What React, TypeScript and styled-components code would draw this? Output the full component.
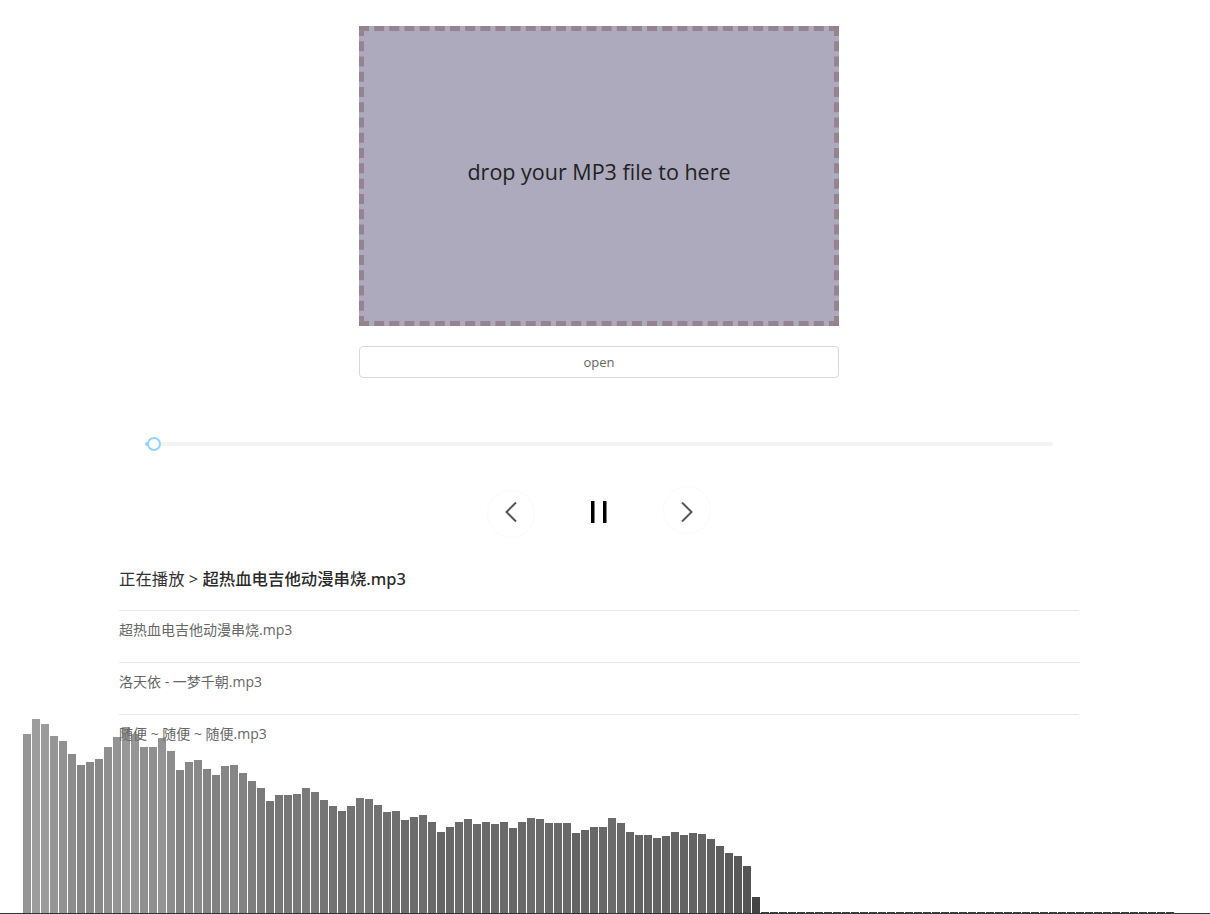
import React, { FC } from "react";
import styled, { createGlobalStyle } from "styled-components";

const GlobalStyle = createGlobalStyle`
  html, body {
    margin: 0;
    padding: 0;
    background: #ffffff;
  }
  body {
    font-family: "Open Sans", "Noto Sans CJK SC", "Noto Sans", sans-serif;
    color: #333333;
    overflow: hidden;
  }
`;

const playlist = [
  "超热血电吉他动漫串烧.mp3",
  "洛天依 - 一梦千朝.mp3",
  "随便 ~ 随便 ~ 随便.mp3",
];

// bar tops in page pixels, read from the spectrum
const barTops = [
  734, 719, 724, 736, 741, 754, 765, 762, 759, 747, 737, 727, 734, 747, 747,
  738, 751, 770, 762, 760, 769, 775, 766, 765, 773, 781, 788, 801, 795, 795,
  794, 788, 792, 800, 806, 811, 806, 798, 799, 805, 812, 811, 820, 817, 815,
  822, 832, 827, 822, 819, 824, 822, 824, 822, 828, 822, 818, 819, 823, 823,
  823, 833, 830, 827, 827, 818, 823, 832, 835, 835, 838, 836, 832, 835, 833,
  834, 839, 846, 853, 856, 866, 897,
];
const BAR_COUNT = 128;
const spectrum = Array.from({ length: BAR_COUNT }, (_, i) =>
  i < barTops.length ? 913 - barTops[i] : 1
);

const ChevronLeft: FC = () => (
  <svg width="16" height="22" viewBox="0 0 16 22">
    <polyline
      points="13,1.5 3.5,11 13,20.5"
      fill="none"
      stroke="#555555"
      strokeWidth="2"
    />
  </svg>
);

const ChevronRight: FC = () => (
  <svg width="16" height="22" viewBox="0 0 16 22">
    <polyline
      points="3,1.5 12.5,11 3,20.5"
      fill="none"
      stroke="#555555"
      strokeWidth="2"
    />
  </svg>
);

const PauseIcon: FC = () => (
  <svg width="18" height="22" viewBox="0 0 18 22">
    <rect x="1" y="0" width="3.5" height="22" fill="#000000" />
    <rect x="13" y="0" width="3.5" height="22" fill="#000000" />
  </svg>
);

const Spectrum: FC = () => (
  <SpectrumWrapper>
    <svg width="1210" height="200" viewBox="0 0 1210 200">
      {spectrum.map((h, i) => {
        const c = Math.min(255, Math.round(60 + h * 0.5));
        return (
          <rect
            key={i}
            x={23 + i * 9}
            y={199 - h}
            width={8}
            height={h}
            fill={`rgb(${c},${c},${c})`}
          />
        );
      })}
      <rect x="0" y="199" width="1210" height="1" fill="#2b3a40" />
    </svg>
  </SpectrumWrapper>
);

const App: FC = () => {
  return (
    <>
      <GlobalStyle />
      <Page>
        <Content>
          <DropZone>
            <DropText>drop your MP3 file to here</DropText>
          </DropZone>
          <OpenButton>open</OpenButton>
          <Slider>
            <SliderFill />
            <SliderHandle />
          </Slider>
          <Controls>
            <RoundButton offset={2}>
              <ChevronLeft />
            </RoundButton>
            <PlayButton>
              <PauseIcon />
            </PlayButton>
            <RoundButton offset={-2}>
              <ChevronRight />
            </RoundButton>
          </Controls>
          <PlaylistWrapper>
            <NowPlaying>
              正在播放 &gt; <CurrentName>{playlist[0]}</CurrentName>
            </NowPlaying>
            {playlist.map((name) => (
              <Track key={name}>{name}</Track>
            ))}
          </PlaylistWrapper>
        </Content>
        <Spectrum />
      </Page>
    </>
  );
};

export default App;

const Page = styled.div`
  position: relative;
  width: 1210px;
  height: 914px;
  overflow: hidden;
`;

const Content = styled.main`
  position: relative;
  z-index: 1;
  width: 1198px;
  display: flex;
  flex-direction: column;
  align-items: center;
  padding-top: 26px;
`;

const DropZone = styled.div`
  box-sizing: border-box;
  width: 480px;
  height: 300px;
  background: #adaabd;
  border: 5px dashed #958490;
  display: flex;
  align-items: center;
  justify-content: center;
`;

const DropText = styled.span`
  font-size: 21.5px;
  color: #222222;
  margin-bottom: 9px;
`;

const OpenButton = styled.button`
  box-sizing: border-box;
  margin-top: 20px;
  width: 480px;
  height: 32px;
  background: #ffffff;
  border: 1px solid #d9d9d9;
  border-radius: 4px;
  font-family: "Open Sans", "Noto Sans", sans-serif;
  font-size: 13px;
  color: #666666;
  cursor: pointer;
`;

const Slider = styled.div`
  position: relative;
  margin-top: 59px;
  width: 908px;
  height: 14px;
  display: flex;
  align-items: center;
  &::before {
    content: "";
    display: block;
    width: 100%;
    height: 4px;
    border-radius: 2px;
    background: #f3f3f3;
  }
`;

const SliderFill = styled.div`
  position: absolute;
  left: 0;
  top: 5px;
  width: 4px;
  height: 4px;
  background: #91d5ff;
  border-radius: 2px;
`;

const SliderHandle = styled.div`
  position: absolute;
  left: 2px;
  top: 0;
  box-sizing: border-box;
  width: 14px;
  height: 14px;
  border-radius: 50%;
  background: #ffffff;
  border: 2px solid #91d5ff;
`;

const Controls = styled.div`
  margin-top: 37px;
  display: flex;
  align-items: center;
  gap: 40px;
`;

const RoundButton = styled.div<{ offset: number }>`
  box-sizing: border-box;
  width: 48px;
  height: 48px;
  border-radius: 50%;
  border: 1px solid #fafafa;
  display: flex;
  align-items: center;
  justify-content: center;
  transform: translateY(${({ offset }) => offset}px);
  svg {
    transform: translateY(${({ offset }) => -offset}px);
  }
`;

const PlayButton = styled.div`
  width: 48px;
  height: 48px;
  display: flex;
  align-items: center;
  justify-content: center;
`;

const PlaylistWrapper = styled.section`
  margin-top: 32px;
  width: 960px;
`;

const NowPlaying = styled.div`
  font-size: 16.4px;
  line-height: 22px;
  color: #333333;
  padding-bottom: 20px;
`;

const CurrentName = styled.span`
  font-family: "Noto Sans", "Noto Sans CJK SC", sans-serif;
  font-weight: 500;
  color: #2a2a2a;
`;

const Track = styled.div`
  border-top: 1px solid #e8e8e8;
  padding: 9px 0 22px;
  font-size: 14px;
  line-height: 20px;
  color: #666666;
`;

const SpectrumWrapper = styled.div`
  position: absolute;
  left: 0;
  bottom: 0;
  width: 1210px;
  height: 200px;
  z-index: 0;
  svg {
    display: block;
  }
`;
